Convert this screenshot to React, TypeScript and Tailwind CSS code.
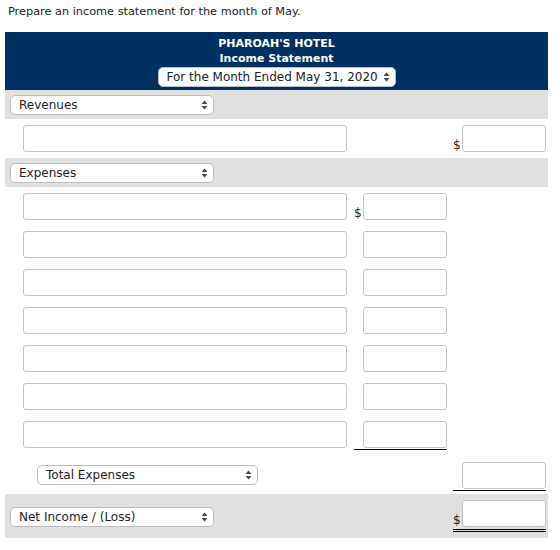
import type { ReactNode } from 'react'

function Arrows() {
  return (
    <svg width="7" height="10" viewBox="0 0 7 10" className="shrink-0">
      <path d="M3.5 0.5 L6.5 4 L0.5 4 Z" fill="#4a4a4a" />
      <path d="M3.5 9.5 L6.5 6 L0.5 6 Z" fill="#4a4a4a" />
    </svg>
  )
}

function Select({ label, className }: { label: string; className: string }) {
  return (
    <div
      className={`flex items-center justify-between rounded-[5px] border border-[#bdbdbd] bg-white pl-[8px] pr-[5px] text-[12px] text-[#222] ${className}`}
    >
      <span className="leading-[14px]">{label}</span>
      <Arrows />
    </div>
  )
}

function Box({ className = '' }: { className?: string }) {
  return <div className={`h-[27px] w-[84px] rounded-[3px] border border-[#c4c4c4] bg-white ${className}`} />
}

function Money({ dollar, line, children }: { dollar?: boolean; line?: 'single' | 'double'; children?: ReactNode }) {
  const lineCls =
    line === 'single' ? 'border-b border-black pb-[1px]' : line === 'double' ? 'border-b-[3px] border-double border-black pb-[2px]' : ''
  return (
    <div className={`flex w-[93px] items-end ${lineCls}`}>
      <span className="w-[9px] text-[12px] leading-[13px] text-[#222]">{dollar ? '$' : ''}</span>
      {children ?? <Box />}
    </div>
  )
}

function Wide() {
  return <div className="ml-[18px] h-[27px] w-[324px] rounded-[3px] border border-[#c4c4c4] bg-white" />
}

export default function App() {
  return (
    <div className="pt-[4px] font-['DejaVu_Sans',Verdana,sans-serif] text-[#222]">
      <p className="pl-[8px] text-[11.3px] leading-[16px]">Prepare an income statement for the month of May.</p>

      <div className="ml-[5px] mt-[12px] w-[543px]">
        <div className="flex h-[58px] flex-col items-center bg-[#003060] pt-[4px] text-white">
          <div className="text-[11px] font-bold leading-[15px]">PHAROAH'S HOTEL</div>
          <div className="text-[11px] font-bold leading-[15px]">Income Statement</div>
          <Select label="For the Month Ended May 31, 2020" className="mt-[1px] h-[20px] w-[238px]" />
        </div>

        <div className="flex h-[29px] items-center bg-[#e0e0e0] pl-[5px]">
          <Select label="Revenues" className="h-[20px] w-[204px]" />
        </div>

        <div className="flex h-[39px] items-start pt-[6px]">
          <Wide />
          <div className="ml-[106px]">
            <Money dollar />
          </div>
        </div>

        <div className="flex h-[29px] items-center bg-[#e0e0e0] pl-[5px]">
          <Select label="Expenses" className="h-[20px] w-[204px]" />
        </div>

        {[0, 1, 2, 3, 4, 5, 6].map((i) => (
          <div key={i} className="flex h-[38px] items-start pt-[6px]">
            <Wide />
            <div className="ml-[7px]">
              <Money dollar={i === 0} line={i === 6 ? 'single' : undefined} />
            </div>
          </div>
        ))}

        <div className="flex h-[41px] items-start">
          <Select label="Total Expenses" className="ml-[32px] mt-[12px] h-[20px] w-[221px]" />
          <div className="ml-[195px] mt-[9px]">
            <Money line="single" />
          </div>
        </div>

        <div className="flex h-[44px] items-start bg-[#e0e0e0]">
          <Select label="Net Income / (Loss)" className="ml-[5px] mt-[13px] h-[20px] w-[204px]" />
          <div className="ml-[239px] mt-[6px]">
            <Money dollar line="double" />
          </div>
        </div>
      </div>
    </div>
  )
}
